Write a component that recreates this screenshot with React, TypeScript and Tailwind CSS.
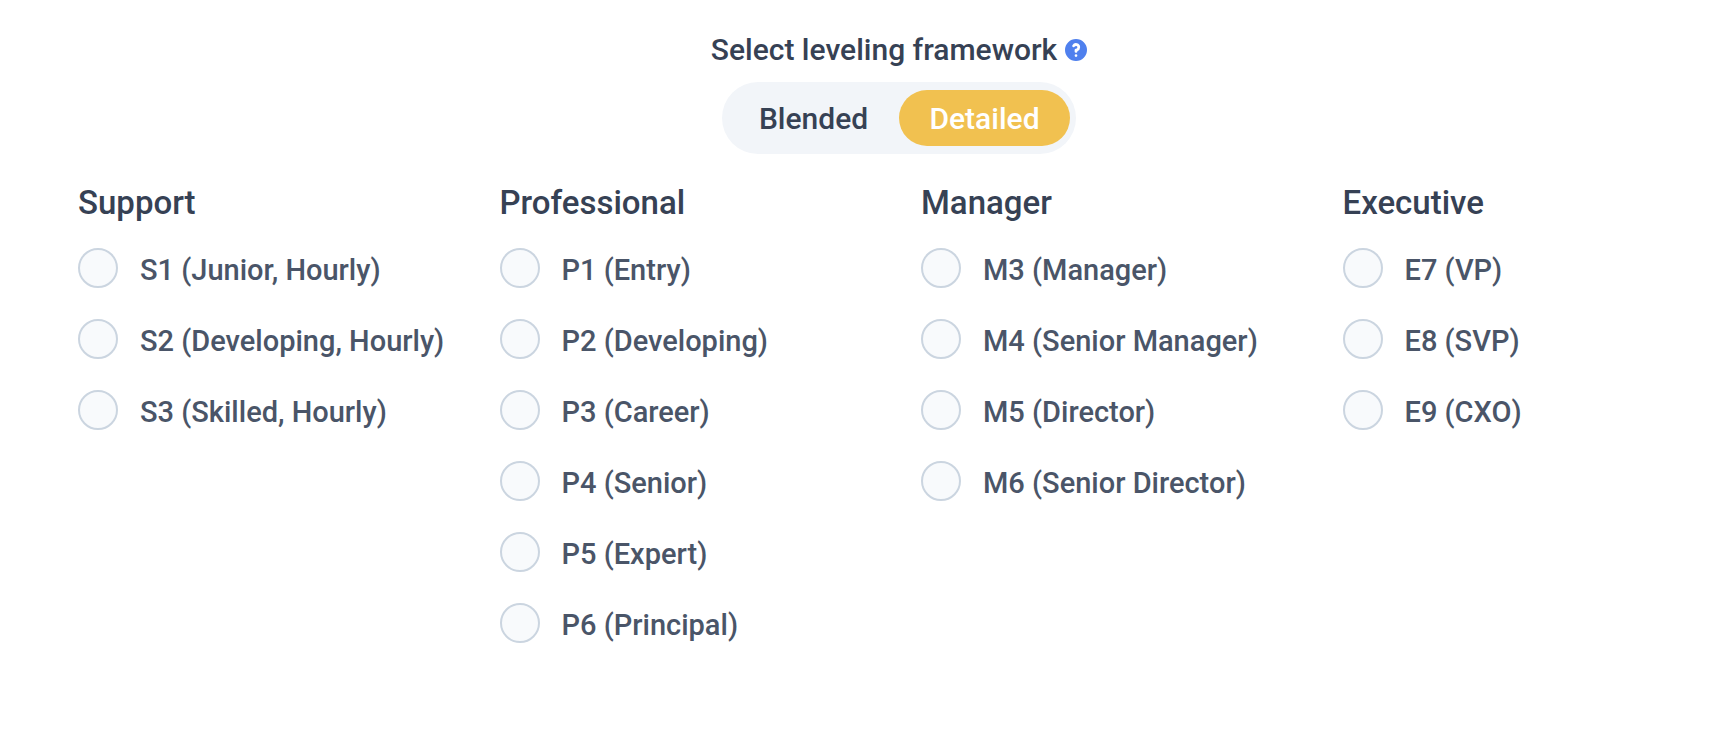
import { useState } from "react";

const frameworks = ["Blended", "Detailed"];

const groups = [
  {
    title: "Support",
    levels: [
      "S1 (Junior, Hourly)",
      "S2 (Developing, Hourly)",
      "S3 (Skilled, Hourly)",
    ],
  },
  {
    title: "Professional",
    levels: [
      "P1 (Entry)",
      "P2 (Developing)",
      "P3 (Career)",
      "P4 (Senior)",
      "P5 (Expert)",
      "P6 (Principal)",
    ],
  },
  {
    title: "Manager",
    levels: [
      "M3 (Manager)",
      "M4 (Senior Manager)",
      "M5 (Director)",
      "M6 (Senior Director)",
    ],
  },
  {
    title: "Executive",
    levels: ["E7 (VP)", "E8 (SVP)", "E9 (CXO)"],
  },
];

function HelpIcon() {
  return (
    <svg viewBox="2 2 16 16" className="size-[22px]" fill="currentColor" aria-hidden="true">
      <path
        fillRule="evenodd"
        clipRule="evenodd"
        d="M18 10a8 8 0 11-16 0 8 8 0 0116 0zm-8-3a1 1 0 00-.867.5 1 1 0 11-1.731-1A3 3 0 0113 8a3.001 3.001 0 01-2 2.83V11a1 1 0 11-2 0v-1a1 1 0 011-1 1 1 0 100-2zm0 8a1 1 0 100-2 1 1 0 000 2z"
      />
    </svg>
  );
}

export default function App() {
  const [framework, setFramework] = useState("Detailed");
  const [level, setLevel] = useState("");

  return (
    <main className="min-h-screen bg-white pt-[30px] pr-[2px] pb-12 pl-[78px] font-[Roboto,sans-serif] font-medium text-[#364154]">
      {/* Framework toggle */}
      <div className="flex flex-col items-center text-[30px]">
        <div className="flex items-center gap-2">
          <h1 className="leading-10">Select leveling framework</h1>
          <button type="button" aria-label="Help" className="cursor-pointer text-[#4f80ee]">
            <HelpIcon />
          </button>
        </div>
        <div className="mt-3 flex rounded-full bg-[#f2f5f9] px-[6px] py-2">
          {frameworks.map((name) => (
            <button
              key={name}
              type="button"
              aria-pressed={framework === name}
              onClick={() => setFramework(name)}
              className={`h-14 w-[171px] cursor-pointer rounded-full ${
                framework === name ? "bg-[#f1c150] text-white" : ""
              }`}
            >
              {name}
            </button>
          ))}
        </div>
      </div>

      {/* Levels */}
      <div className="mt-[29px] grid grid-cols-4 gap-11">
        {groups.map((group) => (
          <section key={group.title}>
            <h2 className="text-[33px] leading-10">{group.title}</h2>
            <ul className="mt-[25px] flex flex-col gap-[27px]">
              {group.levels.map((name) => (
                <li key={name}>
                  <label className="flex cursor-pointer items-start gap-[22px] text-[29px] leading-[44px] whitespace-nowrap text-[#4a5568]">
                    <input
                      type="radio"
                      name="level"
                      value={name}
                      checked={level === name}
                      onChange={() => setLevel(name)}
                      className="size-10 shrink-0 cursor-pointer appearance-none rounded-full border-2 border-[#cbd5e0] bg-[#f8fafc] checked:border-[12px] checked:border-[#f1c150]"
                    />
                    {name}
                  </label>
                </li>
              ))}
            </ul>
          </section>
        ))}
      </div>
    </main>
  );
}
